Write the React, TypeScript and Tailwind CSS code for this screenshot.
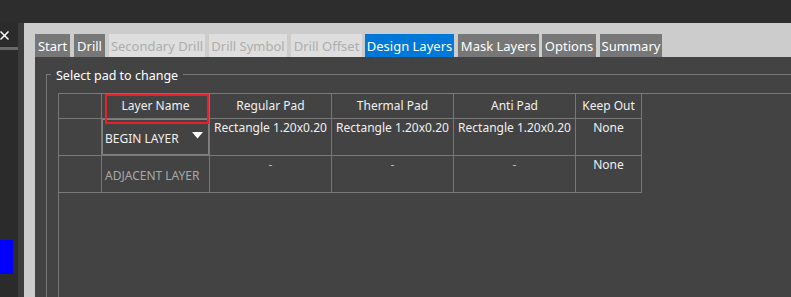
import React from "react";

const font = { fontFamily: '"Noto Sans", "Open Sans", sans-serif' };

type Tab = { label: string; w: string; kind: "normal" | "disabled" | "active"; ml: string };

const tabs: Tab[] = [
  { label: "Start", w: "w-[35px]", kind: "normal", ml: "ml-0" },
  { label: "Drill", w: "w-[31px]", kind: "normal", ml: "ml-[4px]" },
  { label: "Secondary Drill", w: "w-[96px]", kind: "disabled", ml: "ml-[4px]" },
  { label: "Drill Symbol", w: "w-[78px]", kind: "disabled", ml: "ml-[4px]" },
  { label: "Drill Offset", w: "w-[71px]", kind: "disabled", ml: "ml-[4px]" },
  { label: "Design Layers", w: "w-[89px]", kind: "active", ml: "ml-[3px]" },
  { label: "Mask Layers", w: "w-[81px]", kind: "normal", ml: "ml-[4px]" },
  { label: "Options", w: "w-[54px]", kind: "normal", ml: "ml-[3px]" },
  { label: "Summary", w: "w-[62px]", kind: "normal", ml: "ml-[4px]" },
];

function tabClass(k: Tab["kind"]) {
  if (k === "active") return "bg-[#0078d7] text-white";
  if (k === "disabled") return "bg-[#dedede] text-[#adadad]";
  return "bg-[#777777] text-white";
}

const cols = ["w-[43px]", "w-[108px]", "w-[122px]", "w-[122px]", "w-[122px]", "w-[66px]"];

export default function App() {
  return (
    <div className="w-[791px] h-[297px] bg-[#2d2d2d] flex flex-col overflow-hidden text-[12px]" style={font}>
      <div className="h-[23px] shrink-0" />
      <div className="flex flex-1 min-h-0">
        {/* left panel */}
        <div className="w-[18px] bg-[#2b2b2b] flex flex-col shrink-0">
          <svg width="10" height="10" viewBox="0 0 10 10" className="mt-[8px] ml-0">
            <path d="M0.5 0.5 L8.5 8.5 M8.5 0.5 L0.5 8.5" stroke="#ffffff" strokeWidth="1.5" fill="none" />
          </svg>
          <div className="mt-[6px] h-[3px] bg-[#6a6a6a]" />
          <div className="mt-[190px] w-[13px] h-[34px] bg-[#0000ff]" />
        </div>
        <div className="w-[6px] bg-[#3c3c3c] shrink-0" />
        {/* main */}
        <div className="flex-1 bg-[#cccccc] pl-[11px] pt-[11px] flex flex-col min-w-0">
          <div className="flex h-[23px] shrink-0">
            {tabs.map((t) => (
              <div key={t.label} className={`flex ${t.ml}`}>
                <div
                  className={`${t.w} h-[23px] flex items-center justify-center pt-[2px] text-[13px] leading-none ${tabClass(t.kind)}`}
                >
                  {t.label}
                </div>
              </div>
            ))}
          </div>
          <div className="flex-1 bg-[#434343] pl-[11px] pt-[17px] flex flex-col">
            {/* group box */}
            <div className="flex-1 border-l border-t border-[#787878] relative pl-[11px] pt-[18px] flex flex-col">
              <div className="absolute left-[4px] top-[-8px] px-[5px] bg-[#434343] text-white text-[12.5px] leading-[18px]">
                Select pad to change
              </div>
              {/* table */}
              <div className="flex-1 border-l border-t border-[#787878]">
                <div className="w-fit text-[#f0f0f0]">
                  {/* header */}
                  <div className="flex h-[25px]">
                    <div className={`${cols[0]} border-r border-b border-[#787878]`} />
                    <div className={`${cols[1]} border-r border-b border-[#787878] relative flex items-center justify-center`}>
                      Layer Name
                      <div className="absolute left-[3px] top-0 w-[104px] h-[30px] border-2 border-[#e8202a]" />
                    </div>
                    <div className={`${cols[2]} border-r border-b border-[#787878] flex items-center justify-center`}>Regular Pad</div>
                    <div className={`${cols[3]} border-r border-b border-[#787878] flex items-center justify-center`}>Thermal Pad</div>
                    <div className={`${cols[4]} border-r border-b border-[#787878] flex items-center justify-center`}>Anti Pad</div>
                    <div className={`${cols[5]} border-r border-b border-[#787878] flex items-center justify-center`}>Keep Out</div>
                  </div>
                  {/* row 1 */}
                  <div className="flex h-[37px]">
                    <div className={`${cols[0]} border-r border-b border-[#787878]`} />
                    <div className={`${cols[1]} border-r border-b border-[#787878] flex`}>
                      <div className="flex-1 border border-[#808080] flex items-center pl-[2px] pr-[5px] pt-[3px]">
                        <span className="flex-1">BEGIN LAYER</span>
                        <svg width="11" height="7" viewBox="0 0 11 7" className="mb-[6px]">
                          <path d="M0 0 L11 0 L5.5 6.5 Z" fill="#ffffff" />
                        </svg>
                      </div>
                    </div>
                    <div className={`${cols[2]} border-r border-b border-[#787878] text-center pt-[1px] leading-[16px]`}>Rectangle 1.20x0.20</div>
                    <div className={`${cols[3]} border-r border-b border-[#787878] text-center pt-[1px] leading-[16px]`}>Rectangle 1.20x0.20</div>
                    <div className={`${cols[4]} border-r border-b border-[#787878] text-center pt-[1px] leading-[16px]`}>Rectangle 1.20x0.20</div>
                    <div className={`${cols[5]} border-r border-b border-[#787878] text-center pt-[1px] leading-[16px]`}>None</div>
                  </div>
                  {/* row 2 */}
                  <div className="flex h-[37px]">
                    <div className={`${cols[0]} border-r border-b border-[#787878]`} />
                    <div className={`${cols[1]} border-r border-b border-[#787878] flex items-center pl-[3px] pt-[4px] text-[#a8a8a8]`}>
                      ADJACENT LAYER
                    </div>
                    <div className={`${cols[2]} border-r border-b border-[#787878] text-center pt-[1px] leading-[16px] text-[#bdbdbd]`}>-</div>
                    <div className={`${cols[3]} border-r border-b border-[#787878] text-center pt-[1px] leading-[16px] text-[#bdbdbd]`}>-</div>
                    <div className={`${cols[4]} border-r border-b border-[#787878] text-center pt-[1px] leading-[16px] text-[#bdbdbd]`}>-</div>
                    <div className={`${cols[5]} border-r border-b border-[#787878] text-center pt-[1px] leading-[16px]`}>None</div>
                  </div>
                </div>
              </div>
            </div>
          </div>
        </div>
      </div>
    </div>
  );
}
